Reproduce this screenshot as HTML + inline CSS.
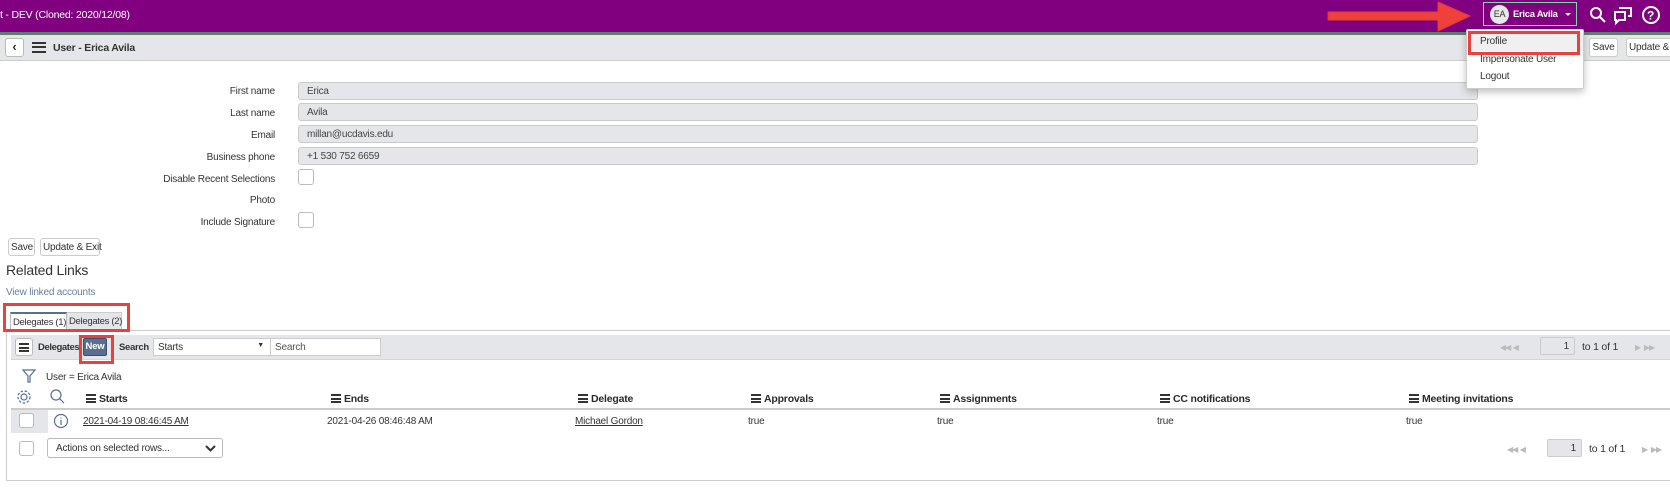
<!DOCTYPE html>
<html><head><style>
*{box-sizing:border-box;margin:0;padding:0}
body{width:1670px;height:496px;position:relative;overflow:hidden;background:#fff;font-family:"Liberation Sans",Arial,sans-serif;font-size:10px;letter-spacing:-0.2px;color:#333}
.a{position:absolute;white-space:nowrap}
.inp{position:absolute;left:298px;width:1180px;height:18px;background:#e4e6e9;border:1px solid #c8cacc;border-radius:3px;padding:3px 8px;font-size:10px;color:#444}
.lbl{position:absolute;right:1395px;font-size:10px;color:#333;text-align:right;white-space:nowrap}
.cb{position:absolute;width:16px;height:16px;border:1px solid #bbb;border-radius:3px;background:#fff}
.btn{position:absolute;height:18px;border:1px solid #ccc;border-radius:3px;background:#fff;font-size:10px;padding:3px 2px;color:#333;white-space:nowrap;text-align:center}
.col{position:absolute;top:393px;font-weight:bold;font-size:10.5px;color:#2a2a2a;white-space:nowrap}
.ham{display:inline-block;width:10px;height:9px;border-top:2px solid #333;border-bottom:2px solid #333;position:relative;vertical-align:-1px;margin-right:3px}
.ham:after{content:"";position:absolute;left:0;right:0;top:1.5px;border-top:2px solid #333}
.red{position:absolute;border:3px solid #e8423f}
.pg{position:absolute;color:#bbb;font-size:8px;letter-spacing:-1px;white-space:nowrap}
</style></head><body>
<div class="a" style="left:0;top:0;width:1670px;height:32px;background:#800080"></div>
<div class="a" style="left:0;top:32px;width:1670px;height:3px;background:#5f7f6e"></div>
<div class="a" style="left:0;top:9px;color:#fff;font-size:10.5px">t - DEV (Cloned: 2020/12/08)</div>
<svg class="a" style="left:1320px;top:0" width="155" height="34"><path d="M8 12 H118 V2 L150 16 L118 31 V20 H8 Z" fill="#f0403c" stroke="#e03a36" stroke-linejoin="round"/></svg>
<div class="a" style="left:1483px;top:2px;width:94px;height:24px;border:1px solid #7fd8a8"></div>
<div class="a" style="left:1490px;top:5px;width:19px;height:19px;border-radius:50%;background:#e8e8e8;color:#333;font-size:9px;text-align:center;line-height:19px">EA</div>
<div class="a" style="left:1513px;top:9px;color:#fff;font-size:9.5px;font-weight:bold;letter-spacing:-0.3px">Erica Avila</div>
<div class="a" style="left:1565px;top:13px;border:3.5px solid transparent;border-top-color:#fff"></div>
<svg class="a" style="left:1588px;top:4px" width="82" height="24" fill="none" stroke="#fff" stroke-width="2">
<circle cx="8" cy="9" r="5"/><path d="M12 13 L17 18"/>
<path d="M31 4 h12 v8 h-3"/><path d="M27 8 h10 v8 h-6 l-3 3 v-3 h-1 z"/>
<circle cx="63" cy="11" r="8"/><text x="59" y="15.5" fill="#fff" stroke="none" font-size="12" font-weight="bold" font-family="Liberation Sans">?</text>
</svg>
<div class="a" style="left:0;top:35px;width:1670px;height:26px;background:#e4e6e9;border-bottom:1px solid #ccc"></div>
<div class="a" style="left:5px;top:38px;width:19px;height:19px;border:1px solid #bbb;border-radius:3px;background:#fff;text-align:center;font-size:13px;line-height:16px;font-weight:bold">‹</div>
<div class="a" style="left:32px;top:42px"><span class="ham" style="width:14px;height:11px"></span></div>
<div class="a" style="left:53px;top:42px;font-weight:bold;font-size:10.5px;color:#333">User - Erica Avila</div>
<div class="btn" style="left:1589px;top:38px;height:19px;width:29px">Save</div>
<div class="btn" style="left:1626px;top:38px;height:19px;width:60px;text-align:left">Update &amp;</div>
<div class="lbl" style="top:86px">First name</div><div class="inp" style="top:82px">Erica</div>
<div class="lbl" style="top:108px">Last name</div><div class="inp" style="top:103px">Avila</div>
<div class="lbl" style="top:130px">Email</div><div class="inp" style="top:125px">millan@ucdavis.edu</div>
<div class="lbl" style="top:152px">Business phone</div><div class="inp" style="top:147px">+1 530 752 6659</div>
<div class="lbl" style="top:174px">Disable Recent Selections</div><div class="cb" style="left:298px;top:169px"></div>
<div class="lbl" style="top:195px">Photo</div>
<div class="lbl" style="top:217px">Include Signature</div><div class="cb" style="left:298px;top:212px"></div>
<div class="btn" style="left:8px;top:238px;width:27px">Save</div>
<div class="btn" style="left:40px;top:238px;width:60px">Update &amp; Exit</div>
<div class="a" style="left:6px;top:262px;font-size:14px;color:#333">Related Links</div>
<div class="a" style="left:6px;top:287px;font-size:10px;color:#6a7f9c">View linked accounts</div>
<div class="a" style="left:6px;top:330px;width:1664px;height:1px;background:#ccc"></div>
<div class="a" style="left:6px;top:330px;width:1px;height:150px;background:#ccc"></div>
<div class="a" style="left:10px;top:312px;width:112px;height:19px;background:#e4e6e9;border:1px solid #ccc"></div>
<div class="a" style="left:10px;top:312px;width:57px;height:19px;background:#fff;border:1px solid #bbb;border-top:2px solid #5a6f8f;font-size:9.5px;letter-spacing:-0.3px;padding:3px 2px">Delegates (1)</div>
<div class="a" style="left:69px;top:316px;font-size:9.5px;letter-spacing:-0.3px">Delegates (2)</div>
<div class="red" style="left:3px;top:303px;width:127px;height:29px"></div>
<div class="a" style="left:11px;top:335px;width:1659px;height:25px;background:#e4e6e9;border-bottom:1px solid #d4d6d8"></div>
<div class="a" style="left:15px;top:338px;width:18px;height:18px;border:1px solid #bbb;border-radius:3px;background:#fff"><span class="ham" style="position:absolute;left:3px;top:4px"></span></div>
<div class="a" style="left:38px;top:342px;font-weight:bold;font-size:9.5px;letter-spacing:-0.4px">Delegates</div>
<div class="a" style="left:83px;top:338px;width:24px;height:18px;background:#5a6f8f;border:1px solid #3d4f6b;border-radius:2px;color:#fff;font-weight:bold;font-size:9.5px;text-align:center;line-height:16px">New</div>
<div class="red" style="left:79px;top:335px;width:35px;height:29px"></div>
<div class="a" style="left:119px;top:342px;font-weight:bold;font-size:9.5px;letter-spacing:-0.3px">Search</div>
<div class="a" style="left:153px;top:338px;width:118px;height:18px;background:#fff;border:1px solid #ccc;font-size:10px;padding:3px 4px">Starts<span style="position:absolute;right:6px;top:3px;font-size:7px">▼</span></div>
<div class="a" style="left:270px;top:338px;width:111px;height:18px;background:#fff;border:1px solid #ccc;font-size:10px;padding:3px 4px;color:#555">Search</div>
<div class="pg" style="left:1500px;top:343px">◀◀ &nbsp;◀</div>
<div class="a" style="left:1540px;top:337px;width:35px;height:18px;border:1px solid #ccc;border-radius:2px;background:#e4e6e9;text-align:right;padding:3px 5px;font-size:10px">1</div>
<div class="a" style="left:1582px;top:341px;font-size:10.5px">to 1 of 1</div>
<div class="pg" style="left:1635px;top:343px">▶ &nbsp; ▶▶</div>
<svg class="a" style="left:22px;top:368px" width="14" height="16" fill="none" stroke="#5a6f8f" stroke-width="1.2"><path d="M1 2 H13 L8 8 V14 H6 V8 Z"/></svg>
<div class="a" style="left:46px;top:372px;font-size:10px">User = Erica Avila</div>
<svg class="a" style="left:17px;top:389px" width="48" height="16" fill="none" stroke="#5a6f8f" stroke-width="1.2"><circle cx="7" cy="8" r="3"/><circle cx="7" cy="8" r="6" stroke-dasharray="2.5 1.6"/><circle cx="39" cy="6" r="5"/><path d="M42.5 9.5 L47 14"/></svg>
<div class="col" style="left:86px"><span class="ham"></span>Starts</div>
<div class="col" style="left:331px"><span class="ham"></span>Ends</div>
<div class="col" style="left:578px"><span class="ham"></span>Delegate</div>
<div class="col" style="left:751px"><span class="ham"></span>Approvals</div>
<div class="col" style="left:940px"><span class="ham"></span>Assignments</div>
<div class="col" style="left:1160px"><span class="ham"></span>CC notifications</div>
<div class="col" style="left:1409px"><span class="ham"></span>Meeting invitations</div>
<div class="a" style="left:11px;top:408px;width:1659px;height:2px;background:#ccc"></div>
<div class="a" style="left:11px;top:410px;width:37px;height:23px;background:#e4e6e9"></div>
<div class="cb" style="left:19px;top:413px;width:15px;height:15px"></div>
<svg class="a" style="left:53px;top:413px" width="16" height="16" fill="none" stroke="#5a6f8f" stroke-width="1.2"><circle cx="8" cy="8" r="6.5"/><path d="M8 7 V12 M8 4.5 V5.5"/></svg>
<div class="a" style="left:83px;top:416px;font-size:10px;text-decoration:underline">2021-04-19 08:46:45 AM</div>
<div class="a" style="left:327px;top:416px;font-size:10px">2021-04-26 08:46:48 AM</div>
<div class="a" style="left:575px;top:416px;font-size:10px;text-decoration:underline">Michael Gordon</div>
<div class="a" style="left:748px;top:416px;font-size:10px">true</div>
<div class="a" style="left:937px;top:416px;font-size:10px">true</div>
<div class="a" style="left:1157px;top:416px;font-size:10px">true</div>
<div class="a" style="left:1406px;top:416px;font-size:10px">true</div>
<div class="cb" style="left:19px;top:441px;width:15px;height:15px"></div>
<div class="a" style="left:47px;top:438px;width:176px;height:20px;border:1px solid #bbb;border-radius:3px;background:#fff;font-size:10px;padding:4px 8px">Actions on selected rows...<svg style="position:absolute;right:6px;top:6px" width="11" height="7" fill="none" stroke="#333" stroke-width="2"><path d="M1 1 L5.5 5.5 L10 1"/></svg></div>
<div class="pg" style="left:1507px;top:445px">◀◀ &nbsp;◀</div>
<div class="a" style="left:1547px;top:439px;width:35px;height:18px;border:1px solid #ccc;border-radius:2px;background:#e4e6e9;text-align:right;padding:3px 5px;font-size:10px">1</div>
<div class="a" style="left:1589px;top:443px;font-size:10.5px">to 1 of 1</div>
<div class="pg" style="left:1642px;top:445px">▶ &nbsp; ▶▶</div>
<div class="a" style="left:6px;top:480px;width:1664px;height:1px;background:#ccc"></div>
<div class="a" style="left:1466px;top:29px;width:118px;height:60px;background:#fff;border:1px solid #ccc;border-radius:2px;box-shadow:0 3px 8px rgba(0,0,0,.25)"></div>
<div class="a" style="left:1467px;top:33px;width:116px;height:18px;background:#f0f0f0"></div>
<div class="a" style="left:1480px;top:36px;font-size:10px">Profile</div>
<div class="a" style="left:1480px;top:54px;font-size:10px">Impersonate User</div>
<div class="a" style="left:1480px;top:71px;font-size:10px">Logout</div>
<div class="red" style="left:1468px;top:31px;width:112px;height:24px"></div>
</body></html>
